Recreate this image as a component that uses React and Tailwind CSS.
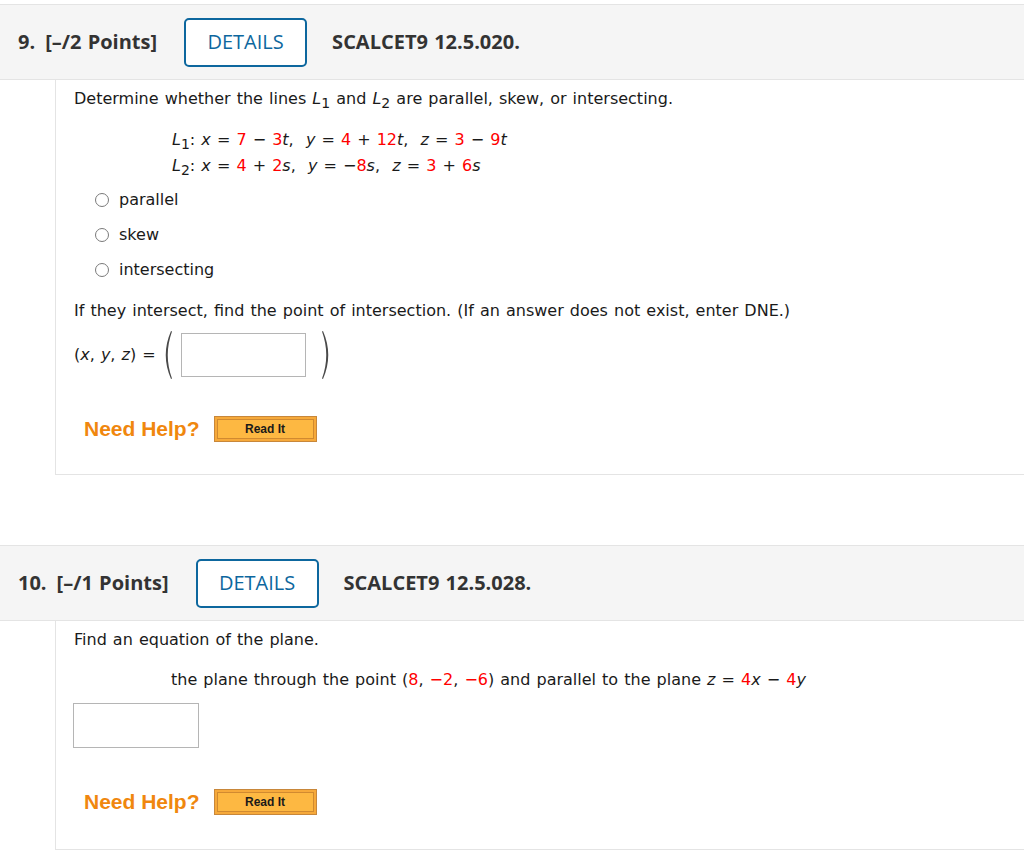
import React from "react";

const R = ({ children }) => <span className="text-[#ff0000]">{children}</span>;
const I = ({ children }) => <span className="italic">{children}</span>;
const Sub = ({ children }) => (
  <span className="relative top-[4px] text-[14px]">{children}</span>
);

function Header({ num, points, code }) {
  return (
    <div className="h-[76px] border-t border-b border-[#e4e4e4] bg-[#f5f5f5] flex items-center pl-[18px] font-['Open_Sans',sans-serif] text-[20px] font-bold text-[#333333]">
      <span>{num}</span>
      <span className="ml-[10px]">[–/{points} Points]</span>
      <div className="ml-[27px] w-[123px] h-[49px] border-2 border-[#0d679e] rounded-[5px] bg-white flex items-center justify-center font-normal text-[#0d679e]">
        DETAILS
      </div>
      <span className="ml-[25px]">{code}</span>
    </div>
  );
}

function ReadIt() {
  return (
    <div className="w-[103px] h-[26px] border border-[#c8873a] bg-[#f6a93a] p-[2px] flex">
      <div className="flex-1 border border-[#d18a30] bg-[#fdb842] flex items-center justify-center font-['Liberation_Sans',Arial,sans-serif] font-bold text-[12px] text-[#1a1a1a] [word-spacing:0px]">
        Read It
      </div>
    </div>
  );
}

function NeedHelp() {
  return (
    <div className="flex items-center pl-[28px]">
      <span className="font-['Liberation_Sans',Arial,sans-serif] font-bold text-[21px] text-[#f0870e] [word-spacing:0px]">
        Need Help?
      </span>
      <div className="ml-[14px]">
        <ReadIt />
      </div>
    </div>
  );
}

function Radio({ label }) {
  return (
    <div className="flex items-center h-[20px] pl-[39px]">
      <span className="w-[14px] h-[14px] rounded-full border border-[#7a7a7a] bg-white" />
      <span className="ml-[10px]">{label}</span>
    </div>
  );
}

function Paren({ right }) {
  return (
    <svg width="14" height="50" viewBox="0 0 14 50" className={right ? "-scale-x-100" : ""}>
      <path d="M11 1 Q0.5 25 11 49 L12 48.5 Q3.5 25 12 1.5 Z" fill="#4a4a4a" />
    </svg>
  );
}

export default function App() {
  return (
    <div className="w-[1024px] h-[859px] bg-white overflow-hidden font-['DejaVu_Sans',Verdana,sans-serif] text-[16px] leading-[20px] text-[#1a1a1a] [word-spacing:1px]">
      <div className="h-[4px]" />
      <Header num="9." points="2" code="SCALCET9 12.5.020." />
      <div className="ml-[55px] h-[395px] border-l border-b border-[#e4e4e4] pl-[18px] pt-[9px] flex flex-col">
        <div>
          Determine whether the lines <I>L</I>
          <Sub>1</Sub> and <I>L</I>
          <Sub>2</Sub> are parallel, skew, or intersecting.
        </div>
        <div className="mt-[21px] pl-[98px] whitespace-pre">
          <I>L</I>
          <Sub>1</Sub>: <I>x</I> = <R>7</R> − <R>3</R>
          <I>t</I>,  <I>y</I> = <R>4</R> + <R>12</R>
          <I>t</I>,  <I>z</I> = <R>3</R> − <R>9</R>
          <I>t</I>
        </div>
        <div className="mt-[6px] pl-[98px] whitespace-pre">
          <I>L</I>
          <Sub>2</Sub>: <I>x</I> = <R>4</R> + <R>2</R>
          <I>s</I>,  <I>y</I> = −<R>8</R>
          <I>s</I>,  <I>z</I> = <R>3</R> + <R>6</R>
          <I>s</I>
        </div>
        <div className="mt-[14px] flex flex-col gap-[15px] -ml-[18px]">
          <Radio label="parallel" />
          <Radio label="skew" />
          <Radio label="intersecting" />
        </div>
        <div className="mt-[21px]">
          If they intersect, find the point of intersection. (If an answer does not exist, enter DNE.)
        </div>
        <div className="mt-[12px] flex items-center h-[44px]">
          <span className="mr-[4px]">
            (<I>x</I>, <I>y</I>, <I>z</I>) =
          </span>
          <Paren />
          <div className="ml-[7px] w-[125px] h-[44px] border border-[#b5b5b5] bg-white" />
          <div className="ml-[14px]">
            <Paren right />
          </div>
        </div>
        <div className="mt-[39px] -ml-[18px]">
          <NeedHelp />
        </div>
      </div>
      <div className="h-[70px]" />
      <Header num="10." points="1" code="SCALCET9 12.5.028." />
      <div className="ml-[55px] h-[229px] border-l border-b border-[#e4e4e4] pl-[18px] pt-[9px] flex flex-col">
        <div>Find an equation of the plane.</div>
        <div className="mt-[20px] pl-[97px]">
          the plane through the point (<R>8</R>, <R>−2</R>, <R>−6</R>) and parallel to the plane{" "}
          <I>z</I> = <R>4</R>
          <I>x</I> − <R>4</R>
          <I>y</I>
        </div>
        <div className="mt-[13px] -ml-[1px] w-[126px] h-[45px] border border-[#b5b5b5] bg-white" />
        <div className="mt-[41px] -ml-[18px]">
          <NeedHelp />
        </div>
      </div>
    </div>
  );
}
